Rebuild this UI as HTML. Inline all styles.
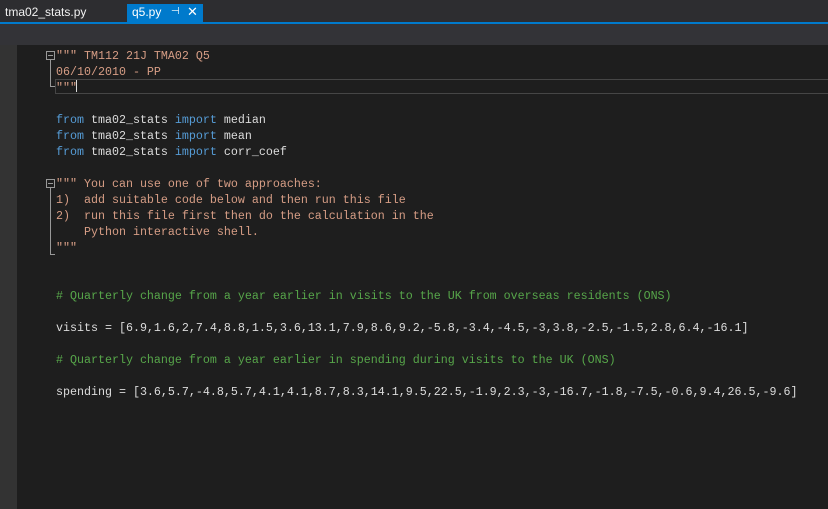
<!DOCTYPE html><html><head><style>
body{margin:0;width:828px;height:509px;background:#1e1e1e;overflow:hidden;position:relative;font-family:"Liberation Sans",sans-serif}
.tabs{position:absolute;left:0;top:0;width:828px;height:22px;background:#2d2d30}
.tab1{position:absolute;left:5px;top:5px;color:#f1f1f1;font-size:12px}
.tab2{position:absolute;left:127px;top:4px;width:76px;height:18px;background:#007acc;color:#fff;font-size:12px}
.bl{position:absolute;left:0;top:22px;width:828px;height:2px;background:#007acc}
.tb{position:absolute;left:0;top:24px;width:828px;height:21px;background:#333337}
.gut{position:absolute;left:0;top:45px;width:17px;height:464px;background:#333333}
.code{position:absolute;left:56px;top:48px;font-family:"Liberation Mono",monospace;font-size:11.67px;line-height:16px;color:#dcdcdc;white-space:pre}
.s{color:#d69d85}.k{color:#569cd6}.c{color:#57a64a}
.fb{position:absolute;width:7px;height:7px;border:1px solid #999;left:46px}
.fb:after{content:"";position:absolute;left:1px;top:3px;width:5px;height:1px;background:#999}
.fl{position:absolute;left:50px;width:1px;background:#999}
</style></head><body>
<div class="tabs"><div class="tab1">tma02_stats.py</div><div class="tab2"><span style="position:absolute;left:5px;top:1px">q5.py</span><span style="position:absolute;left:44px;font-size:10px;top:2px">⊣</span><span style="position:absolute;left:60px;font-size:13px;top:0px">✕</span></div></div>
<div class="bl"></div><div class="tb"></div><div class="gut"></div>
<div style="position:absolute;left:55px;top:79px;width:773px;height:13px;border:1px solid #464646"></div>
<div style="position:absolute;left:76px;top:80px;width:1px;height:12px;background:#dcdcdc"></div>
<div class="fb" style="top:51px"></div><div class="fl" style="top:60px;height:27px"></div><div class="fl" style="top:86px;width:5px;height:1px"></div>
<div class="fb" style="top:179px"></div><div class="fl" style="top:188px;height:67px"></div><div class="fl" style="top:254px;width:5px;height:1px"></div>
<div class="code"><span class="s">""" TM112 21J TMA02 Q5
06/10/2010 - PP
"""</span>

<span class="k">from</span> tma02_stats <span class="k">import</span> median
<span class="k">from</span> tma02_stats <span class="k">import</span> mean
<span class="k">from</span> tma02_stats <span class="k">import</span> corr_coef

<span class="s">""" You can use one of two approaches:
1)  add suitable code below and then run this file
2)  run this file first then do the calculation in the
    Python interactive shell.
"""</span>


<span class="c"># Quarterly change from a year earlier in visits to the UK from overseas residents (ONS)</span>

visits = [6.9,1.6,2,7.4,8.8,1.5,3.6,13.1,7.9,8.6,9.2,-5.8,-3.4,-4.5,-3,3.8,-2.5,-1.5,2.8,6.4,-16.1]

<span class="c"># Quarterly change from a year earlier in spending during visits to the UK (ONS)</span>

spending = [3.6,5.7,-4.8,5.7,4.1,4.1,8.7,8.3,14.1,9.5,22.5,-1.9,2.3,-3,-16.7,-1.8,-7.5,-0.6,9.4,26.5,-9.6]</div>
</body></html>
